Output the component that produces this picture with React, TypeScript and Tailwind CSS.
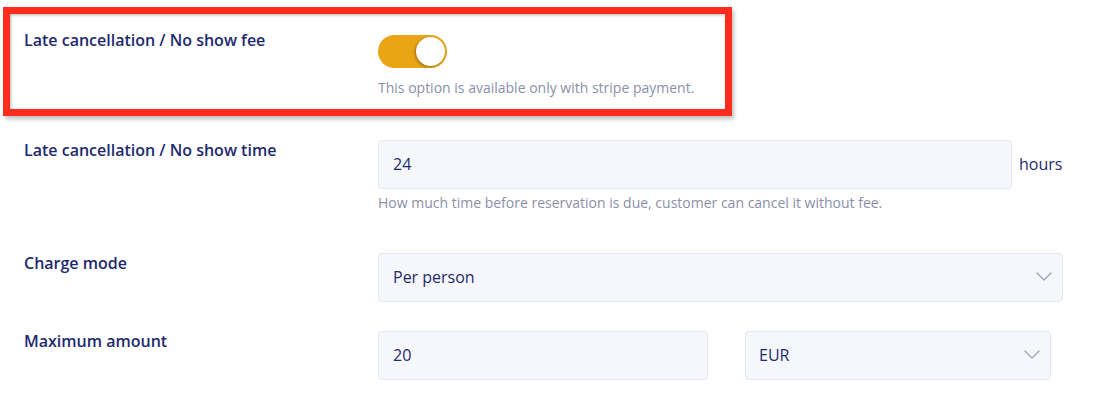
import React from "react";

function Chevron() {
  return (
    <svg width="16" height="9" viewBox="0 0 16 9" fill="none" className="shrink-0">
      <path d="M1 1l7 7 7-7" stroke="#9aa0b8" strokeWidth="1.2" strokeLinecap="round" strokeLinejoin="round" />
    </svg>
  );
}

const label = "text-[16px] leading-[20px] font-semibold text-[#1e2a6e]";
const help = "text-[14px] leading-[18px] text-[#8a8fa9]";
const field =
  "h-[49px] rounded-[4px] border border-[#e4e7f4] bg-[#f6f7fc] flex items-center pb-[2px] text-[16px] text-[#1e2a6e]";

export default function App() {
  return (
    <div className="w-[1119px] h-[403px] bg-white overflow-hidden" style={{ fontFamily: "'Open Sans', Lato, sans-serif" }}>
      {/* Highlighted row */}
      <div className="ml-[3px] mt-[7px] w-[729px] h-[109px] border-[7px] border-[#ff2b1c] shadow-[2px_3px_4px_rgba(0,0,0,0.25)]">
        <div className="h-full w-full shadow-[inset_1px_1px_3px_rgba(0,0,0,0.3)] pl-[14px] pt-[16px] flex">
          <div className={`w-[354px] shrink-0 ${label}`}>Late cancellation / No show fee</div>
          <div className="flex flex-col pt-[5px]">
            <div className="w-[69px] h-[33px] rounded-full bg-[#e9a514] relative">
              <div className="absolute right-[2px] top-[2px] w-[29px] h-[29px] rounded-full bg-white shadow-[-1px_1px_3px_rgba(0,0,0,0.35)]" />
            </div>
            <div className={`mt-[11px] ${help}`}>This option is available only with stripe payment.</div>
          </div>
        </div>
      </div>

      {/* Late cancellation time */}
      <div className="flex pl-[24px] mt-[24px]">
        <div className={`w-[354px] shrink-0 ${label}`}>Late cancellation / No show time</div>
        <div className="flex flex-col">
          <div className="flex items-center">
            <div className={`${field} w-[634px] pl-[14px]`}>24</div>
            <div className="ml-[7px] pb-[2px] text-[16px] text-[#1e2a6e]">hours</div>
          </div>
          <div className={`mt-[5px] ${help}`}>How much time before reservation is due, customer can cancel it without fee.</div>
        </div>
      </div>

      {/* Charge mode */}
      <div className="flex pl-[24px] mt-[41px]">
        <div className={`w-[354px] shrink-0 ${label}`}>Charge mode</div>
        <div className={`${field} w-[685px] pl-[14px] pr-[10px] justify-between`}>
          <span>Per person</span>
          <Chevron />
        </div>
      </div>

      {/* Maximum amount */}
      <div className="flex pl-[24px] mt-[29px]">
        <div className={`w-[354px] shrink-0 ${label}`}>Maximum amount</div>
        <div className={`${field} w-[330px] pl-[14px]`}>20</div>
        <div className={`${field} w-[306px] ml-[37px] pl-[13px] pr-[10px] justify-between`}>
          <span>EUR</span>
          <Chevron />
        </div>
      </div>
    </div>
  );
}
